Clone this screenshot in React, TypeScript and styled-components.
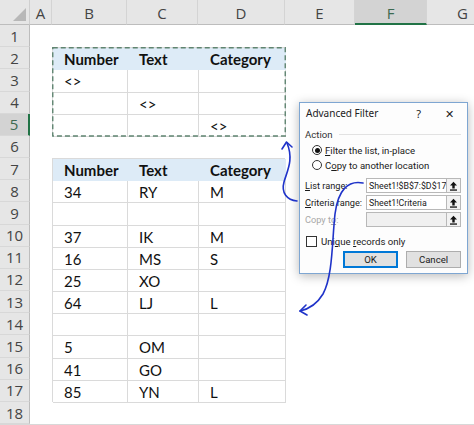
import React from 'react'
import styled, { createGlobalStyle, css } from 'styled-components'

const ROW_H = 22.18
const ROW_COUNT = 18
const COLS = ['A', 'B', 'C', 'D', 'E', 'F', 'G']
const COL_W = [22, 75, 71, 87, 70, 72, 72]
const SELECTED_COL = 'F'
const SELECTED_ROW = 5

const criteria = [
	['<>', '', ''],
	['', '<>', ''],
	['', '', '<>'],
]

const data = [
	['34', 'RY', 'M'],
	['', '', ''],
	['37', 'IK', 'M'],
	['16', 'MS', 'S'],
	['25', 'XO', ''],
	['64', 'LJ', 'L'],
	['', '', ''],
	['5', 'OM', ''],
	['41', 'GO', ''],
	['85', 'YN', 'L'],
]

const headers = ['Number', 'Text', 'Category']

const GlobalStyle = createGlobalStyle`
	html, body {
		margin: 0;
		padding: 0;
		background: #ffffff;
	}
	* {
		box-sizing: border-box;
	}
`

function ExcelTable({ rows, startRow, dashed }: { rows: string[][]; startRow: number; dashed?: boolean }) {
	return (
		<Table $start={startRow} $count={rows.length + 1}>
			{headers.map((h) => (
				<Cell key={h} $header>
					{h}
				</Cell>
			))}
			{rows.map((r, i) => r.map((v, j) => <Cell key={`${i}-${j}`}>{v}</Cell>))}
			{dashed && (
				<Ants>
					<svg width='100%' height='100%'>
						<rect
							x='0.75'
							y='0.75'
							width='calc(100% - 1.5px)'
							height='calc(100% - 1.5px)'
							fill='none'
							stroke='#5f8470'
							strokeWidth='1.4'
							strokeDasharray='5 3'
						/>
					</svg>
				</Ants>
			)}
		</Table>
	)
}

function UpArrowIcon() {
	return (
		<svg width='9' height='10' viewBox='0 0 9 10'>
			<path d='M4.5 0.8 L8 4.6 H5.7 V7.4 H3.3 V4.6 H1 Z' fill='#111' />
			<rect x='1' y='8.4' width='7' height='1.3' fill='#111' />
		</svg>
	)
}

function AdvancedFilterDialog() {
	return (
		<Dialog>
			<TitleBar>
				<span>Advanced Filter</span>
				<TitleButtons>
					<span>?</span>
					<span>✕</span>
				</TitleButtons>
			</TitleBar>
			<Body>
				<GroupTitle>
					<span>Action</span>
					<GroupLine />
				</GroupTitle>
				<RadioRow>
					<Radio $checked />
					<span>
						<u>F</u>ilter the list, in-place
					</span>
				</RadioRow>
				<RadioRow>
					<Radio />
					<span>
						C<u>o</u>py to another location
					</span>
				</RadioRow>
				<FieldRow $first>
					<FieldLabel>
						<u>L</u>ist range:
					</FieldLabel>
					<RangeInput>Sheet1!$B$7:$D$17</RangeInput>
					<PickButton>
						<UpArrowIcon />
					</PickButton>
				</FieldRow>
				<FieldRow>
					<FieldLabel>
						<u>C</u>riteria range:
					</FieldLabel>
					<RangeInput>Sheet1!Criteria</RangeInput>
					<PickButton>
						<UpArrowIcon />
					</PickButton>
				</FieldRow>
				<FieldRow>
					<FieldLabel $disabled>
						Copy t<u>o</u>:
					</FieldLabel>
					<RangeInput $disabled />
					<PickButton>
						<UpArrowIcon />
					</PickButton>
				</FieldRow>
				<CheckRow>
					<CheckBox />
					<span>
						Uni<u>q</u>ue <u>r</u>ecords only
					</span>
				</CheckRow>
				<ButtonRow>
					<DialogButton $default>OK</DialogButton>
					<DialogButton>Cancel</DialogButton>
				</ButtonRow>
			</Body>
		</Dialog>
	)
}

export default function App() {
	return (
		<>
			<GlobalStyle />
			<Page>
				<Sheet>
					<Corner />
					{COLS.map((c, i) => (
						<ColHeader key={c} $col={i + 2} $selected={c === SELECTED_COL}>
							{c}
						</ColHeader>
					))}
					{Array.from({ length: ROW_COUNT }, (_, i) => (
						<RowHeader key={i} $row={i + 2} $selected={i + 1 === SELECTED_ROW}>
							{i + 1}
						</RowHeader>
					))}
					<ExcelTable rows={criteria} startRow={2} dashed />
					<ExcelTable rows={data} startRow={7} />
				</Sheet>
				<AdvancedFilterDialog />
				<Arrows width='474' height='425' viewBox='0 0 474 425'>
					<g fill='none' stroke='#1f33c9' strokeWidth='1.6' strokeLinecap='round' strokeLinejoin='round'>
						<path d='M297 201 C287 200 281 193 284 182 C287 171 294 160 287 143' />
						<path d='M282 149 L286.5 142 L292 147' />
						<path d='M363 183 C348 180 338 190 335 214 C332 240 333 276 323 294 C317 304 309 309 300 311' />
						<path d='M306 305 L300 311 L307 315' />
					</g>
				</Arrows>
			</Page>
		</>
	)
}

const Page = styled.div`
	position: relative;
	width: 474px;
	height: 425px;
	overflow: hidden;
	background: #ffffff;
	font-family: Lato, 'Liberation Sans', sans-serif;
`

const Sheet = styled.div`
	display: grid;
	grid-template-columns: 30px ${COL_W.map((w) => `${w}px`).join(' ')};
	grid-template-rows: 25px repeat(${ROW_COUNT}, ${ROW_H}px);
	border-bottom: 1px solid #d8d8d8;
`

const headerBase = css`
	background: #e6e6e6;
	color: #444444;
	display: flex;
	align-items: center;
	justify-content: center;
	font-family: 'Open Sans', 'Liberation Sans', sans-serif;
`

const Corner = styled.div`
	${headerBase};
	grid-column: 1;
	grid-row: 1;
	position: relative;
	border-right: 1px solid #cfcfcf;
	border-bottom: 1px solid #bdbdbd;

	&::after {
		content: '';
		position: absolute;
		right: 3px;
		bottom: 3px;
		border-left: 13px solid transparent;
		border-bottom: 13px solid #b8b8b8;
	}
`

const ColHeader = styled.div<{ $col: number; $selected?: boolean }>`
	${headerBase};
	grid-column: ${(p) => p.$col};
	grid-row: 1;
	font-size: 15px;
	padding-top: 2px;
	border-right: 1px solid #d4d4d4;
	border-bottom: 1px solid #bdbdbd;
	${(p) =>
		p.$selected &&
		css`
			background: #d3d3d3;
			color: #3c6a50;
			border-bottom: 2px solid #217346;
		`}
`

const RowHeader = styled.div<{ $row: number; $selected?: boolean }>`
	${headerBase};
	grid-column: 1;
	grid-row: ${(p) => p.$row};
	font-size: 15px;
	border-right: 1px solid #bdbdbd;
	border-bottom: 1px solid #d8d8d8;
	${(p) =>
		p.$selected &&
		css`
			background: #d3d3d3;
			color: #3c6a50;
			border-right: 2px solid #217346;
		`}
`

const Table = styled.div<{ $start: number; $count: number }>`
	position: relative;
	grid-column: 3 / 6;
	grid-row: ${(p) => p.$start + 1} / span ${(p) => p.$count};
	display: grid;
	grid-template-columns: 75px 71px 87px;
	grid-auto-rows: ${ROW_H}px;
	border-left: 1px solid #dadada;
	border-top: 1px solid #dadada;
`

const Cell = styled.div<{ $header?: boolean }>`
	display: flex;
	align-items: center;
	padding: 1px 0 0 11px;
	font-size: 15px;
	color: #111111;
	border-right: 1px solid #dadada;
	border-bottom: 1px solid #dadada;
	white-space: nowrap;
	${(p) =>
		p.$header &&
		css`
			background: #ddebf7;
			font-weight: 700;
			border-bottom-color: #ddebf7;
			border-right-color: #ddebf7;
		`}
`

const Ants = styled.div`
	position: absolute;
	inset: -1px;
	pointer-events: none;

	svg {
		display: block;
	}
`

const Dialog = styled.div`
	position: absolute;
	left: 299px;
	top: 102px;
	width: 169px;
	height: 172px;
	background: #fdfdfd;
	border: 1px solid #7ea6d2;
	box-shadow: 0 2px 10px rgba(0, 0, 0, 0.28);
	font-family: Roboto, 'Noto Sans', sans-serif;
	font-size: 9.2px;
	color: #1a1a1a;
	display: flex;
	flex-direction: column;
`

const TitleBar = styled.div`
	height: 20px;
	display: flex;
	align-items: center;
	justify-content: space-between;
	padding: 0 0 0 6px;
	font-family: 'Noto Sans', 'Open Sans', sans-serif;
	font-size: 10px;
	color: #222222;
`

const TitleButtons = styled.div`
	display: flex;
	align-items: center;
	gap: 24px;
	padding-right: 13px;
	font-size: 11px;
`

const Body = styled.div`
	flex: 1;
	display: flex;
	flex-direction: column;
	padding: 3px 6px 5px 5px;
`

const GroupTitle = styled.div`
	height: 16px;
	display: flex;
	align-items: center;
	gap: 6px;
	font-size: 9.6px;
	color: #333333;
`

const GroupLine = styled.div`
	flex: 1;
	height: 1px;
	background: #e2e2e2;
`

const RadioRow = styled.div`
	height: 14px;
	display: flex;
	align-items: center;
	gap: 3px;
	padding-left: 7px;
	margin-top: 1px;
	font-size: 9.6px;
`

const Radio = styled.span<{ $checked?: boolean }>`
	width: 10px;
	height: 10px;
	border-radius: 50%;
	border: 1px solid #333333;
	background: #ffffff;
	display: inline-flex;
	align-items: center;
	justify-content: center;

	&::after {
		content: '';
		width: 5px;
		height: 5px;
		border-radius: 50%;
		background: ${(p) => (p.$checked ? '#111111' : 'transparent')};
	}
`

const FieldRow = styled.div<{ $first?: boolean }>`
	height: 15px;
	display: flex;
	align-items: center;
	margin-top: ${(p) => (p.$first ? '6px' : '2px')};
`

const FieldLabel = styled.span<{ $disabled?: boolean }>`
	width: 61px;
	flex-shrink: 0;
	color: ${(p) => (p.$disabled ? '#a8a8a8' : '#1a1a1a')};
	white-space: nowrap;
`

const RangeInput = styled.div<{ $disabled?: boolean }>`
	width: 82px;
	height: 15px;
	border: 1px solid #b8b8b8;
	border-right: none;
	background: ${(p) => (p.$disabled ? '#f0f0f0' : '#ffffff')};
	display: flex;
	align-items: center;
	padding-left: 2px;
	font-size: 8.8px;
	white-space: nowrap;
	overflow: hidden;
`

const PickButton = styled.div`
	width: 15px;
	height: 15px;
	border: 1px solid #b8b8b8;
	background: #f2f2f2;
	display: flex;
	align-items: center;
	justify-content: center;
`

const CheckRow = styled.div`
	height: 14px;
	margin-top: 7px;
	display: flex;
	align-items: center;
	gap: 4px;
	padding-left: 1px;
	font-size: 9.6px;
`

const CheckBox = styled.span`
	width: 11px;
	height: 11px;
	border: 1px solid #333333;
	background: #ffffff;
`

const ButtonRow = styled.div`
	margin-top: auto;
	display: flex;
	justify-content: flex-end;
	gap: 8px;
	font-size: 9.6px;
`

const DialogButton = styled.div<{ $default?: boolean }>`
	width: 55px;
	height: 17px;
	display: flex;
	align-items: center;
	justify-content: center;
	background: #e1e1e1;
	border: 1px solid ${(p) => (p.$default ? '#0078d7' : '#adadad')};
	${(p) =>
		p.$default &&
		css`
			box-shadow: inset 0 0 0 1px #0078d7;
		`}
`

const Arrows = styled.svg`
	position: absolute;
	left: 0;
	top: 0;
	pointer-events: none;
`
